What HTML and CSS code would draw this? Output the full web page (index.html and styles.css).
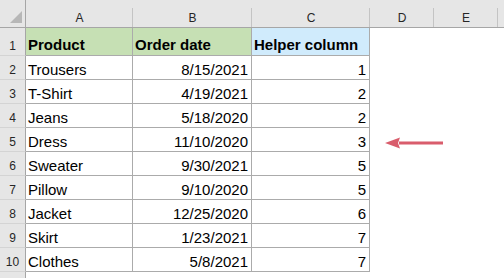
FILE: index.html
```html
<!DOCTYPE html>
<html>
<head>
<meta charset="utf-8">
<link rel="stylesheet" href="styles.css">
</head>
<body>
<div class="sheet">
  <div class="corner"><span class="tri"></span></div>
  <div class="ch">A</div>
  <div class="ch">B</div>
  <div class="ch">C</div>
  <div class="ch">D</div>
  <div class="ch">E</div>
  <div class="ch last"></div>

  <div class="rh">1</div>
  <div class="c t hdr green">Product</div>
  <div class="c t hdr green">Order date</div>
  <div class="c t hdr blue">Helper column</div>
  <div class="c e"></div><div class="c e"></div><div class="c e"></div>

  <div class="rh">2</div><div class="c t">Trousers</div><div class="c t n">8/15/2021</div><div class="c t n">1</div><div class="c e"></div><div class="c e"></div><div class="c e"></div>
  <div class="rh">3</div><div class="c t">T-Shirt</div><div class="c t n">4/19/2021</div><div class="c t n">2</div><div class="c e"></div><div class="c e"></div><div class="c e"></div>
  <div class="rh">4</div><div class="c t">Jeans</div><div class="c t n">5/18/2020</div><div class="c t n">2</div><div class="c e"></div><div class="c e"></div><div class="c e"></div>
  <div class="rh">5</div><div class="c t">Dress</div><div class="c t n">11/10/2020</div><div class="c t n">3</div><div class="c e arrowcell"><svg class="arrow" width="60" height="12" viewBox="0 0 60 12"><path d="M14 4.6 H58 V7.4 H14 Z" fill="#d95d6c"/><path d="M0 6 L15 0.5 L13 6 L15 11.5 Z" fill="#d95d6c"/></svg></div><div class="c e"></div><div class="c e"></div>
  <div class="rh">6</div><div class="c t">Sweater</div><div class="c t n">9/30/2021</div><div class="c t n">5</div><div class="c e"></div><div class="c e"></div><div class="c e"></div>
  <div class="rh">7</div><div class="c t">Pillow</div><div class="c t n">9/10/2020</div><div class="c t n">5</div><div class="c e"></div><div class="c e"></div><div class="c e"></div>
  <div class="rh">8</div><div class="c t">Jacket</div><div class="c t n">12/25/2020</div><div class="c t n">6</div><div class="c e"></div><div class="c e"></div><div class="c e"></div>
  <div class="rh">9</div><div class="c t">Skirt</div><div class="c t n">1/23/2021</div><div class="c t n">7</div><div class="c e"></div><div class="c e"></div><div class="c e"></div>
  <div class="rh">10</div><div class="c t">Clothes</div><div class="c t n">5/8/2021</div><div class="c t n">7</div><div class="c e"></div><div class="c e"></div><div class="c e"></div>
  <div class="rh"></div><div class="c e"></div><div class="c e"></div><div class="c e"></div><div class="c e"></div><div class="c e"></div><div class="c e"></div>
</div>
</body>
</html>
```

FILE: styles.css
```css
html, body {
  margin: 0;
  padding: 0;
  background: #ffffff;
  overflow: hidden;
}
.sheet {
  display: grid;
  grid-template-columns: 26px 107px 119px 118px 64px 64px 6px;
  grid-template-rows: 28px 28px repeat(9, 24px) 20px;
  font-family: "Liberation Sans", Arial, sans-serif;
  width: 504px;
  height: 278px;
  overflow: hidden;
}
.corner {
  background: #e6e6e6;
  border-right: 1px solid #a6a6a6;
  border-bottom: 1px solid #a6a6a6;
  box-sizing: border-box;
  position: relative;
}
.tri {
  position: absolute;
  left: 10px;
  top: 11px;
  width: 0;
  height: 0;
  border-left: 12px solid transparent;
  border-bottom: 12px solid #b7b7b7;
}
.ch {
  background: #e6e6e6;
  border-bottom: 1px solid #a6a6a6;
  box-sizing: border-box;
  font-size: 12px;
  color: #262626;
  text-align: center;
  line-height: 20px;
  padding-top: 8px;
  background-image: linear-gradient(#c4c4c4, #c4c4c4);
  background-size: 1px 19px;
  background-position: right 8px;
  background-repeat: no-repeat;
}
.ch.last { background-image: none; }
.rh {
  background: #e6e6e6;
  border-right: 1px solid #a6a6a6;
  border-bottom: 1px solid #d4d4d4;
  box-sizing: border-box;
  font-size: 12px;
  color: #262626;
  text-align: center;
  display: flex;
  align-items: flex-end;
  justify-content: center;
  padding-bottom: 2px;
  line-height: 14px;
}
.c {
  box-sizing: border-box;
  font-size: 15px;
  color: #000;
  white-space: nowrap;
  overflow: hidden;
}
.t {
  border-right: 1px solid #ababab;
  border-bottom: 1px solid #ababab;
  display: flex;
  align-items: flex-end;
  padding: 0 3px 0 2px;
  line-height: 18px;
}
.n { justify-content: flex-end; }
.hdr { font-weight: bold; padding-bottom: 1px; }
.green { background: #c6e0b4; }
.blue { background: #d0ebfc; }
.e { background: #fff; }
.arrowcell { position: relative; overflow: visible; }
.arrow {
  position: absolute;
  left: 15px;
  top: 9px;
}
```
